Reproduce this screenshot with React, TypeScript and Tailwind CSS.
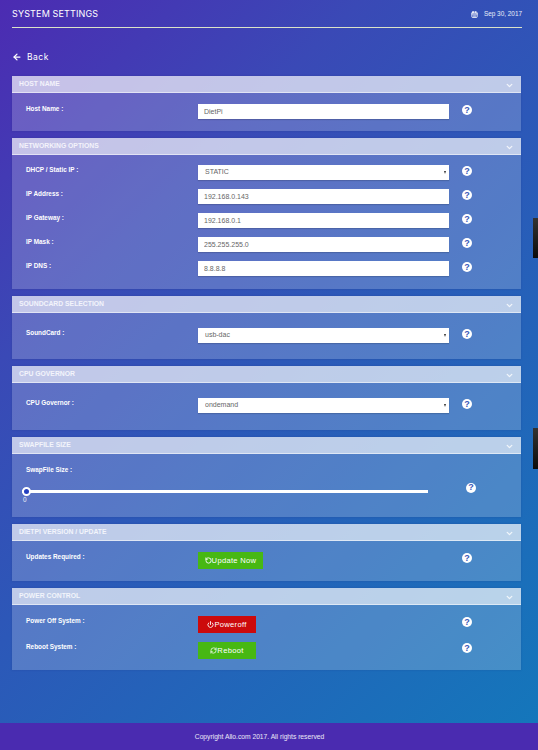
import { ArrowLeft, CalendarDays, ChevronDown, Power, RefreshCw, RotateCcw } from "lucide-react";

function Help() {
  return (
    <span className="w-[10px] h-[10px] rounded-full bg-white flex items-center justify-center text-[9px] leading-none font-bold text-[#3a58b8]">
      ?
    </span>
  );
}

function Panel({ title, className = "", children }: { title: string; className?: string; children: React.ReactNode }) {
  return (
    <section className="bg-white/[.2] shadow-[0_0_2px_rgba(30,40,120,0.25)]">
      <div className="h-[17px] px-[7px] flex items-center justify-between bg-white/[.62] border-b border-white/50">
        <h2 className="text-[6.8px] font-bold uppercase text-white/80">{title}</h2>
        <ChevronDown className="w-[9px] h-[9px] mt-[2px] text-white/80" strokeWidth={3.5} />
      </div>
      <div className={className}>{children}</div>
    </section>
  );
}

function Row({ label, children }: { label: string; children: React.ReactNode }) {
  return (
    <div className="flex items-start h-[15px]">
      <label className="w-[186px] pl-[14px] text-[6.4px] leading-[9px] font-bold text-white">{label}</label>
      <div className="w-[251px]">{children}</div>
      <div className="ml-[13px] pt-[1px]">
        <Help />
      </div>
    </div>
  );
}

function TextField({ value }: { value: string }) {
  return (
    <input
      readOnly
      value={value}
      className="block w-full h-[15px] px-[6px] bg-white text-[7px] text-[#666] outline-none shadow-[0_1px_1px_rgba(0,0,0,0.15)]"
    />
  );
}

function SelectField({ value }: { value: string }) {
  return (
    <div className="relative">
      <select
        value={value}
        onChange={() => {}}
        className="block w-full h-[15px] pl-[7px] bg-white text-[7px] text-[#666] outline-none appearance-none shadow-[0_1px_1px_rgba(0,0,0,0.15)]"
      >
        <option>{value}</option>
      </select>
      <span className="absolute right-[3px] top-[6px] border-x-[1.5px] border-t-[3px] border-x-transparent border-t-[#333]" />
    </div>
  );
}

export default function App() {
  return (
    <div className="relative w-[538px] h-[750px] overflow-hidden flex flex-col bg-[linear-gradient(135deg,#4c2bb2,#3a49b6_28%,#2c58b8_50%,#1378bb)] font-['Liberation_Sans',sans-serif]">
      <div className="flex-1 px-[12px]">
        {/* Header */}
        <header className="w-[510px] h-[28px] flex items-end justify-between border-b border-[#dbe3c8] shadow-[0_-1px_0_#2a32c0]">
          <h1 className="mb-[7px] text-[9px] leading-[12px] tracking-[0.15px] text-white font-['Inter',sans-serif]">SYSTEM SETTINGS</h1>
          <div className="mb-[8px] flex items-center gap-[6px] text-[6.4px] leading-[10px] text-white/90">
            <CalendarDays className="w-[7px] h-[7px] text-white" strokeWidth={3} />
            <span>Sep 30, 2017</span>
          </div>
        </header>

        <a className="mt-[23px] mb-[13px] h-[12px] flex items-center gap-[5px] text-[8.5px] tracking-[0.5px] text-white font-['Inter',sans-serif]">
          <ArrowLeft className="w-[10px] h-[10px]" strokeWidth={3} />
          Back
        </a>

        <div className="w-[509px] flex flex-col gap-[7px]">
          <Panel title="Host Name" className="h-[38px] pt-[11px]">
            <Row label="Host Name :">
              <TextField value="DietPi" />
            </Row>
          </Panel>

          <Panel title="Networking Options" className="h-[134px] pt-[10px] flex flex-col gap-[9px]">
            <Row label="DHCP / Static IP :">
              <SelectField value="STATIC" />
            </Row>
            <Row label="IP Address :">
              <TextField value="192.168.0.143" />
            </Row>
            <Row label="IP Gateway :">
              <TextField value="192.168.0.1" />
            </Row>
            <Row label="IP Mask :">
              <TextField value="255.255.255.0" />
            </Row>
            <Row label="IP DNS :">
              <TextField value="8.8.8.8" />
            </Row>
          </Panel>

          <Panel title="Soundcard Selection" className="h-[46px] pt-[15px]">
            <Row label="SoundCard :">
              <SelectField value="usb-dac" />
            </Row>
          </Panel>

          <Panel title="CPU Governor" className="h-[47px] pt-[15px]">
            <Row label="CPU Governor :">
              <SelectField value="ondemand" />
            </Row>
          </Panel>

          <Panel title="Swapfile Size" className="h-[63px] pt-[11px]">
            <div className="pl-[14px] text-[6.4px] leading-[9px] font-bold text-white">SwapFile Size :</div>
            <div className="mt-[16px] flex items-center">
              <div className="relative ml-[10px] w-[406px] h-[3px] bg-white">
                <span className="absolute left-0 top-[-3px] w-[9px] h-[9px] rounded-full bg-[#2540c0] border-2 border-white" />
              </div>
              <div className="ml-[38px] -mt-[8px]">
                <Help />
              </div>
            </div>
            <div className="pl-[11px] mt-[2px] text-[6.4px] leading-[9px] text-white/90">0</div>
          </Panel>

          <Panel title="DietPi Version / Update" className="h-[40px] pt-[11px]">
            <div className="flex items-start">
              <label className="w-[186px] pl-[14px] text-[6.4px] leading-[9px] font-bold text-white">Updates Required :</label>
              <button className="w-[65px] h-[17px] flex items-center justify-center bg-[#47b813] text-[7.6px] tracking-[0.3px] text-white">
                <RotateCcw className="w-[7px] h-[7px]" strokeWidth={3} />
                Update Now
              </button>
              <div className="ml-[199px] pt-[1px]">
                <Help />
              </div>
            </div>
          </Panel>

          <Panel title="Power Control" className="h-[65px] pt-[11px] flex flex-col gap-[9px]">
            <div className="flex items-start">
              <label className="w-[186px] pl-[14px] text-[6.4px] leading-[9px] font-bold text-white">Power Off System :</label>
              <button className="w-[58px] h-[17px] flex items-center justify-center bg-[#cc0a0c] text-[7.6px] tracking-[0.3px] text-white">
                <Power className="w-[7px] h-[7px]" strokeWidth={3} />
                Poweroff
              </button>
              <div className="ml-[206px] pt-[1px]">
                <Help />
              </div>
            </div>
            <div className="flex items-start">
              <label className="w-[186px] pl-[14px] text-[6.4px] leading-[9px] font-bold text-white">Reboot System :</label>
              <button className="w-[58px] h-[17px] flex items-center justify-center bg-[#47b813] text-[7.6px] tracking-[0.3px] text-white">
                <RefreshCw className="w-[7px] h-[7px]" strokeWidth={2.5} />
                Reboot
              </button>
              <div className="ml-[206px] pt-[1px]">
                <Help />
              </div>
            </div>
          </Panel>
        </div>
      </div>

      <footer className="h-[27px] pt-[1px] pr-[19px] flex items-center justify-center bg-[#4a2bb0] text-[6.7px] text-white/90">
        Copyright Allo.com 2017. All rights reserved
      </footer>

      {/* neighbouring window peeking in at the right edge */}
      <div className="absolute right-0 top-[218px] w-[5px] h-[40px] bg-[linear-gradient(#333,#0c0c0c)]" />
      <div className="absolute right-0 top-[428px] w-[5px] h-[41px] bg-[linear-gradient(#333,#0c0c0c)]" />
    </div>
  );
}
